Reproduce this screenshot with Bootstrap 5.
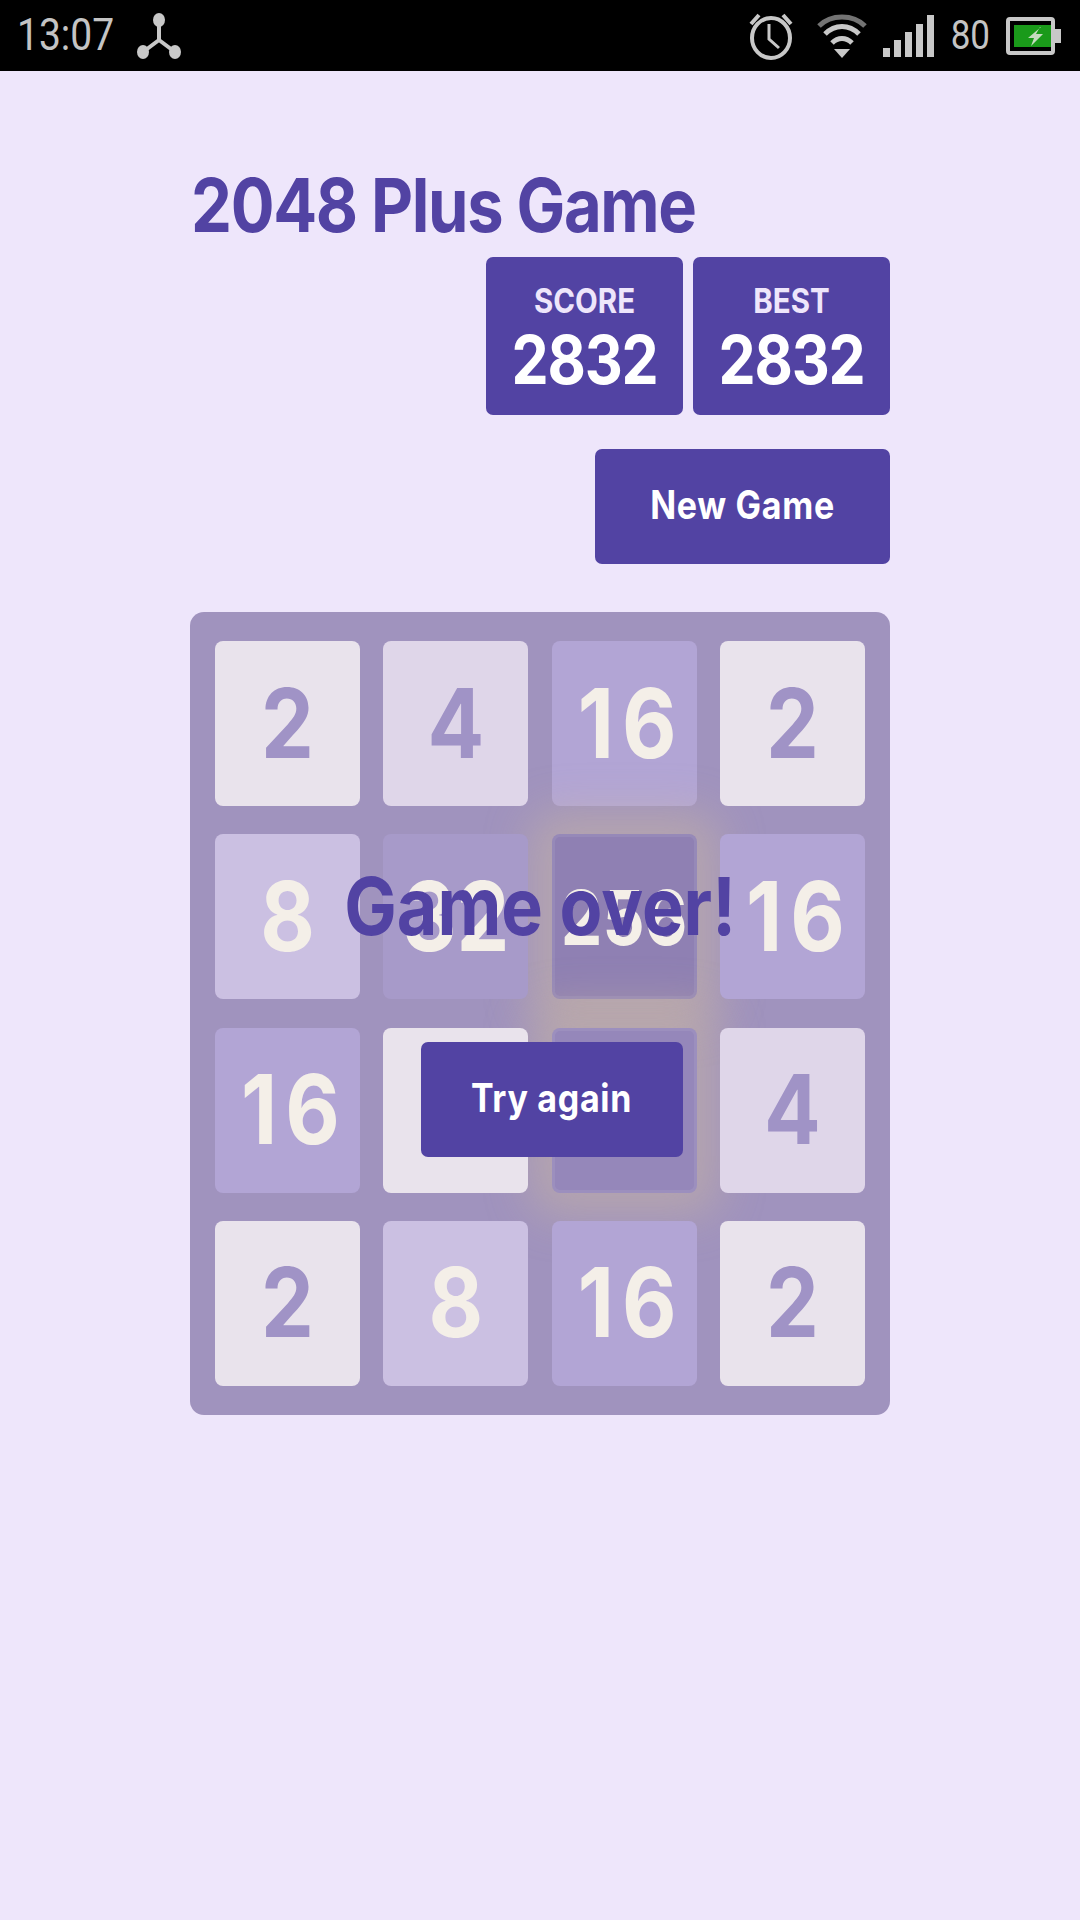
<!DOCTYPE html>
<html lang="en">
<head>
    <meta charset="UTF-8">
    <title>2048 Plus Game</title>
    <link rel="stylesheet" href="https://cdn.jsdelivr.net/npm/bootstrap@5.3.0/dist/css/bootstrap.min.css">
    <script src="https://cdn.jsdelivr.net/npm/bootstrap@5.3.0/dist/js/bootstrap.bundle.min.js"></script>
    <style>
        body { background: #eee6fb; font-family: Inter, sans-serif; font-weight: 700; }
        .status-bar { height: 71px; background: #000; color: #c4c4c4; font-family: Roboto, sans-serif; font-weight: 400; padding: 0 18px 0 17px; }
        .status-time { font-size: 39px; line-height: 1; margin-right: 22px; }
        .status-level { font-size: 35px; line-height: 1; }
        .tall { display: inline-block; transform: scaleY(1.147); }
        .game-wrap { width: 700px; margin: 0 auto; }
        .game-title { color: #5243a3; font-size: 65px; font-weight: 700; line-height: 78px; margin: 96px 0 12px 1px; white-space: nowrap; letter-spacing: -.02em; }
        .score-gap { gap: 10px; }
        .score-box { width: 197px; height: 158px; background: #5243a3; border-radius: 7px; color: #fff; padding-top: 2px; }
        .score-label { font-size: 29.5px; line-height: 38px; color: #eee6fb; }
        .score-value { font-size: 59px; line-height: 66px; letter-spacing: -.02em; margin-top: 8px; }
        .game-btn { background: #5243a3; color: #fff; border: 0; border-radius: 7px; font-size: 34px; font-weight: 700; height: 115px; letter-spacing: .02em; padding-bottom: 10px; }
        .game-btn:hover { background: #5243a3; color: #fff; }
        .new-btn { width: 295px; margin-top: 34px; }
        .board { position: relative; margin-top: 48px; background: #a093be; border-radius: 14px; padding: 29px 25px; display: grid; grid-template-columns: repeat(4, 145px); grid-auto-rows: 165px; justify-content: space-between; row-gap: 28.3px; }
        .tile { border-radius: 8px; font-size: 84px; line-height: 1; position: relative; z-index: 2; }
        .tile-under { z-index: 0; }
        .t2 { background: #e9e3ec; color: #a093c6; }
        .t4 { background: #dfd6e9; color: #a093c6; }
        .t8 { background: #cbc0e2; color: #f4efe8; }
        .t16 { background: #b2a5d5; color: #f4efe8; }
        .t16 .tall { letter-spacing: 8px; padding-left: 14px; }
        .t32 { background: #a79ac9; color: #f4efe8; }
        .t128, .t256 { color: #f4efe8; font-size: 66px; box-shadow: 0 0 45px 22px rgba(215, 195, 150, .38), inset 0 0 0 3px rgba(255, 255, 255, .07); z-index: 1; }
        .t128 { background: #9587ba; }
        .t256 { background: #8f80b3; }
        .over-layer { position: absolute; inset: 0; z-index: 3; }
        .over-text { color: #5243a3; font-size: 70px; line-height: 1; margin-top: 259px; white-space: nowrap; }
        .try-btn { width: 262px; margin: 101px 0 0 23px; }
    </style>
</head>
<body>

    <!-- Status bar -->
    <div class="status-bar d-flex align-items-center">
        <span class="status-time tall">13:07</span>
        <svg width="46" height="46" viewBox="0 0 46 46">
            <path d="M23 7V27M23 27L7 39M23 27L39 39" stroke="#c8c8c8" stroke-width="4" fill="none"/>
            <ellipse cx="23" cy="7" rx="6" ry="7" fill="#c8c8c8"/>
            <ellipse cx="7" cy="39" rx="6" ry="7" fill="#c8c8c8"/>
            <ellipse cx="39" cy="39" rx="6" ry="7" fill="#c8c8c8"/>
        </svg>
        <span class="ms-auto d-flex align-items-center">
            <svg width="44" height="48" viewBox="0 0 44 48" class="me-4">
                <ellipse cx="22" cy="26" rx="19" ry="20" stroke="#c8c8c8" stroke-width="4" fill="none"/>
                <path d="M20 12V27L30 36" stroke="#c8c8c8" stroke-width="3" fill="none"/>
                <path d="M2 12L10 3M42 12L34 3" stroke="#c8c8c8" stroke-width="4" fill="none"/>
            </svg>
            <svg width="50" height="46" viewBox="0 0 50 46" class="me-3">
                <path d="M2 13C14 1 36 1 48 13" stroke="#737373" stroke-width="5" fill="none"/>
                <path d="M8 21C18 11 32 11 42 21" stroke="#c8c8c8" stroke-width="5" fill="none"/>
                <path d="M15 30C21 24 29 24 35 30" stroke="#c8c8c8" stroke-width="5" fill="none"/>
                <path d="M17 36H33L25 45Z" fill="#c8c8c8"/>
            </svg>
            <svg width="52" height="42" viewBox="0 0 52 42" class="me-3">
                <rect x="0" y="33" width="7" height="9" fill="#c8c8c8"/>
                <rect x="11" y="25" width="7" height="17" fill="#c8c8c8"/>
                <rect x="22" y="17" width="7" height="25" fill="#c8c8c8"/>
                <rect x="33" y="9" width="7" height="33" fill="#c8c8c8"/>
                <rect x="44" y="0" width="7" height="42" fill="#c8c8c8"/>
            </svg>
            <span class="status-level tall me-3">80</span>
            <svg width="56" height="38" viewBox="0 0 56 38">
                <rect x="2" y="2" width="45" height="34" rx="2" stroke="#c8c8c8" stroke-width="4" fill="none"/>
                <rect x="49" y="12" width="6" height="14" fill="#c8c8c8"/>
                <rect x="8" y="8" width="37" height="22" fill="#1a9a1a"/>
                <path d="M35 10L22 21H28L25 29L37 17H30L34 10Z" fill="#c5dbc0"/>
            </svg>
        </span>
    </div>

    <div class="game-wrap">
        <h1 class="game-title"><span class="tall">2048 Plus Game</span></h1>

        <div class="d-flex justify-content-end score-gap">
            <div class="score-box d-flex flex-column align-items-center justify-content-center">
                <span class="score-label tall">SCORE</span>
                <span class="score-value tall">2832</span>
            </div>
            <div class="score-box d-flex flex-column align-items-center justify-content-center">
                <span class="score-label tall">BEST</span>
                <span class="score-value tall">2832</span>
            </div>
        </div>

        <div class="d-flex justify-content-end">
            <button class="btn game-btn new-btn"><span class="tall">New Game</span></button>
        </div>

        <div class="board">
            <div class="tile t2 d-flex align-items-center justify-content-center"><span class="tall">2</span></div>
            <div class="tile t4 d-flex align-items-center justify-content-center"><span class="tall">4</span></div>
            <div class="tile tile-under t16 d-flex align-items-center justify-content-center"><span class="tall">16</span></div>
            <div class="tile t2 d-flex align-items-center justify-content-center"><span class="tall">2</span></div>

            <div class="tile t8 d-flex align-items-center justify-content-center"><span class="tall">8</span></div>
            <div class="tile t32 d-flex align-items-center justify-content-center"><span class="tall">32</span></div>
            <div class="tile t256 d-flex align-items-center justify-content-center"><span class="tall">256</span></div>
            <div class="tile t16 d-flex align-items-center justify-content-center"><span class="tall">16</span></div>

            <div class="tile t16 d-flex align-items-center justify-content-center"><span class="tall">16</span></div>
            <div class="tile t2 d-flex align-items-center justify-content-center"><span class="tall">2</span></div>
            <div class="tile t128 d-flex align-items-center justify-content-center"><span class="tall">128</span></div>
            <div class="tile t4 d-flex align-items-center justify-content-center"><span class="tall">4</span></div>

            <div class="tile t2 d-flex align-items-center justify-content-center"><span class="tall">2</span></div>
            <div class="tile t8 d-flex align-items-center justify-content-center"><span class="tall">8</span></div>
            <div class="tile t16 d-flex align-items-center justify-content-center"><span class="tall">16</span></div>
            <div class="tile t2 d-flex align-items-center justify-content-center"><span class="tall">2</span></div>

            <!-- Game over overlay -->
            <div class="over-layer d-flex flex-column align-items-center">
                <div class="over-text"><span class="tall">Game over!</span></div>
                <button class="btn game-btn try-btn"><span class="tall">Try again</span></button>
            </div>
        </div>
    </div>

</body>
</html>
